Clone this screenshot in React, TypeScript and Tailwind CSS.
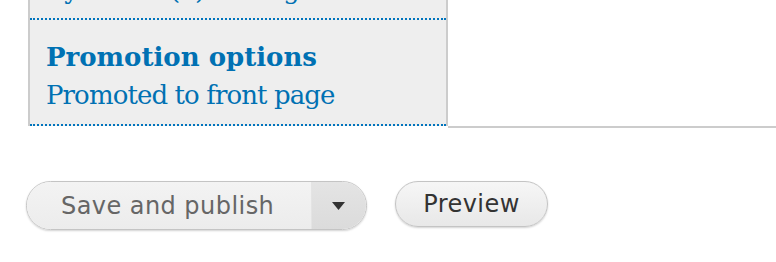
import React from 'react';

const serif = { fontFamily: '"DejaVu Serif", Georgia, serif' };
const sans = { fontFamily: '"DejaVu Sans", "Lucida Grande", sans-serif' };

function Summary() {
  return (
    <div className="w-[420px] shrink-0 border-x-2 border-[#cccccc] bg-[#eeeeee]" style={serif}>
      {/* previous section, scrolled mostly out of view */}
      <div className="mt-[-29px] border-b-2 border-dotted border-[#0074bd] pl-4 pb-[9px] text-[26px] leading-[38px] tracking-[-0.9px] text-[#0071b3]">
        By admin (1) on Aug 3
      </div>
      <div className="border-b-2 border-dotted border-[#0074bd] pl-4 pt-[18px] pb-[10px] text-[26px] leading-[38px] text-[#0071b3]">
        <div className="font-bold">Promotion options</div>
        <div className="tracking-[-0.9px]">Promoted to front page</div>
      </div>
    </div>
  );
}

export default function App() {
  return (
    <div className="h-[262px] w-[776px] overflow-hidden bg-white">
      <div className="flex items-start pl-[28px]">
        <Summary />
        <div className="h-[128px] flex-1 border-b-2 border-[#cccccc]" />
      </div>

      <div className="flex items-start gap-[28px] pl-[26px] pt-[53px] text-[24px] tracking-[0.45px]" style={sans}>
        <div className="flex h-[49px] w-[341px] overflow-hidden rounded-full border border-[#c4c4c4] shadow-[0_1px_2px_rgba(0,0,0,0.18)]">
          <button className="flex h-full w-[284px] items-center bg-gradient-to-b from-[#f3f3f3] to-[#ececec] pl-[34px] text-[#666666]">
            Save and publish
          </button>
          <button className="flex h-full flex-1 items-center justify-center border-l border-[#e4e4e4] bg-gradient-to-b from-[#e4e4e4] to-[#dbdbdb] pr-[2px]">
            <svg width="13" height="8" viewBox="0 0 13 8">
              <path d="M0 0h13L6.5 8z" fill="#333333" />
            </svg>
          </button>
        </div>
        <button className="flex h-[46px] w-[153px] items-center justify-center rounded-full border border-[#c4c4c4] bg-gradient-to-b from-[#f6f6f6] to-[#e8e8e8] text-[#333333] shadow-[0_1px_2px_rgba(0,0,0,0.18)]">
          Preview
        </button>
      </div>
    </div>
  );
}
